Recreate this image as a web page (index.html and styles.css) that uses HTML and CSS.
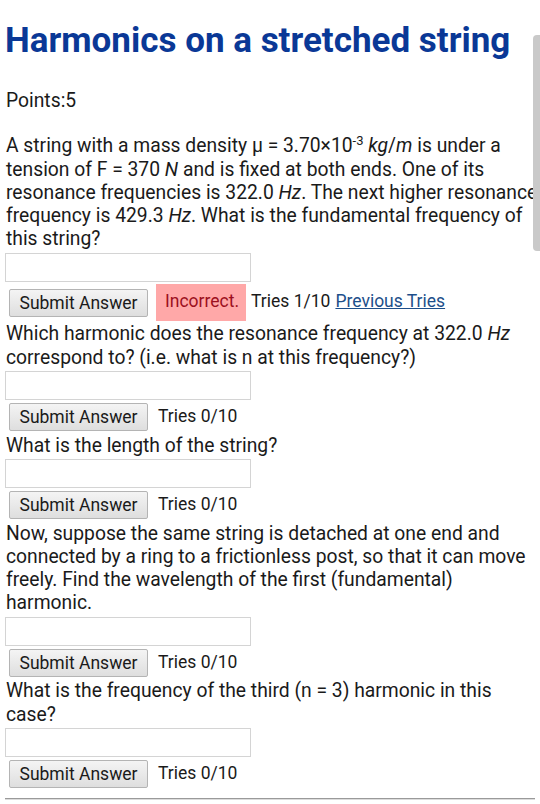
FILE: index.html
```html
<!DOCTYPE html>
<html>
<head>
<meta charset="utf-8">
<link rel="stylesheet" href="styles.css">
</head>
<body>
<div class="page">
  <h1 class="title">Harmonics on a stretched string</h1>
  <div class="points">Points:5</div>

  <div class="q q-first">A string with a mass density μ = 3.70×10<sup>-3</sup> <i>kg</i>/<i>m</i> is under a tension of F = 370 <i>N</i> and is fixed at both ends. One of its resonance frequencies is 322.0 <i>Hz</i>. The next higher resonance frequency is 429.3 <i>Hz</i>. What is the fundamental frequency of this string?</div>
  <div class="answer"></div>
  <div class="row row-wide">
    <button class="submit">Submit Answer</button>
    <span class="incorrect">Incorrect.</span>
    <span class="tries tries-after">Tries 1/10</span>
    <a class="prev" href="#">Previous Tries</a>
  </div>

  <div class="q">Which harmonic does the resonance frequency at 322.0 <i>Hz</i> correspond to? (i.e. what is n at this frequency?)</div>
  <div class="answer"></div>
  <div class="row">
    <button class="submit">Submit Answer</button>
    <span class="tries">Tries 0/10</span>
  </div>

  <div class="q">What is the length of the string?</div>
  <div class="answer"></div>
  <div class="row">
    <button class="submit">Submit Answer</button>
    <span class="tries">Tries 0/10</span>
  </div>

  <div class="q">Now, suppose the same string is detached at one end and connected by a ring to a frictionless post, so that it can move freely. Find the wavelength of the first (fundamental) harmonic.</div>
  <div class="answer"></div>
  <div class="row">
    <button class="submit">Submit Answer</button>
    <span class="tries">Tries 0/10</span>
  </div>

  <div class="q">What is the frequency of the third (n = 3) harmonic in this case?</div>
  <div class="answer"></div>
  <div class="row">
    <button class="submit">Submit Answer</button>
    <span class="tries">Tries 0/10</span>
  </div>

  <hr class="rule">
</div>
<div class="scroll-thumb"></div>
</body>
</html>
```

FILE: styles.css
```css
html, body {
  margin: 0;
  padding: 0;
  background: #ffffff;
}
body {
  font-family: Roboto, "Liberation Sans", sans-serif;
  font-size: 19.3px;
  line-height: 23.3px;
  color: #1a1a1a;
  overflow: hidden;
}
.page {
  padding: 0 0 0 5px;
}
.title {
  margin: 20px 0 0 0;
  font-size: 35px;
  line-height: 41px;
  font-weight: 700;
  color: #0a3896;
  white-space: nowrap;
}
.points {
  margin-top: 28px;
  padding-left: 1px;
}
.q {
  padding-left: 1px;
}
.q-first {
  margin-top: 22px;
}
.q sup {
  font-size: 13px;
  line-height: 0;
  vertical-align: 7px;
}
.answer {
  margin-top: 2px;
  width: 244px;
  height: 27px;
  border: 1px solid #d4d4d4;
  background: #fff;
}
.row {
  display: flex;
  align-items: center;
  height: 33.7px;
  font-size: 17.5px;
}
.row-wide {
  height: 40.5px;
}
.submit {
  margin: 1px 0 0 4px;
  width: 139px;
  height: 28px;
  padding: 0;
  border: 1px solid #b4b4b4;
  border-radius: 2px;
  background: linear-gradient(#f4f4f4, #dedede);
  font-family: Roboto, "Liberation Sans", sans-serif;
  font-size: 17.5px;
  color: #1a1a1a;
}
.incorrect {
  margin-left: 8px;
  height: 37px;
  padding: 0 7px 0 9px;
  display: flex;
  align-items: center;
  background: #ffa8a8;
  color: #9c1020;
}
.tries {
  margin-left: 10px;
}
.tries-after {
  margin-left: 5px;
}
.prev {
  margin-left: 5px;
  color: #1d4f8a;
  text-decoration: underline;
}
.rule {
  margin: 7px 5px 0 0;
  height: 0;
  border: 0;
  border-top: 1px solid #9a9a9a;
  border-bottom: 1px solid #dcdcdc;
}
.scroll-thumb {
  position: absolute;
  top: 35px;
  right: 0;
  width: 7px;
  height: 216px;
  background: #c9c9c9;
  border-radius: 4px 0 0 4px;
}
```
